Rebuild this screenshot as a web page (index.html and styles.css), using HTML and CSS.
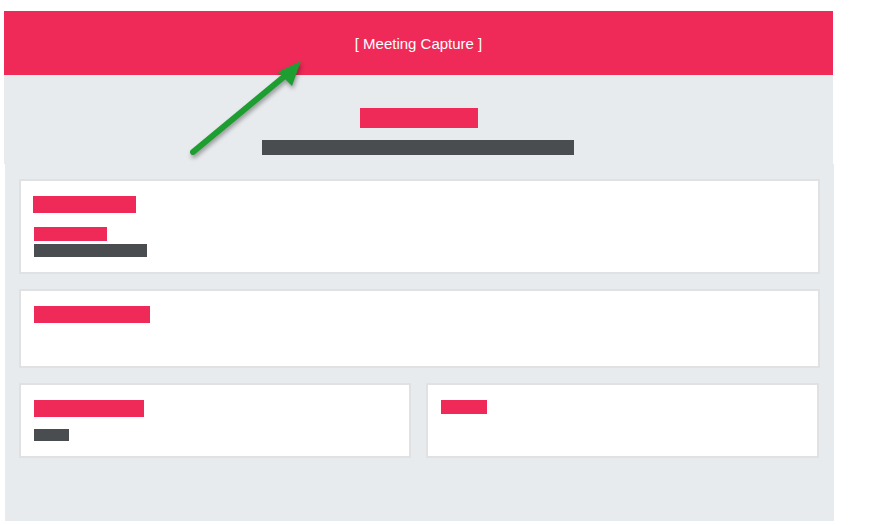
FILE: index.html
```html
<!DOCTYPE html>
<html lang="en">
<head>
<meta charset="utf-8">
<title>Meeting Capture</title>
<link rel="stylesheet" href="styles.css">
</head>
<body>
<div class="page">
  <header class="topbar">[ Meeting Capture ]</header>
  <section class="hero">
    <div class="bar red hero-title"></div>
    <div class="bar dark hero-sub"></div>
  </section>
  <main class="panel">
    <div class="card card-a">
      <div class="bar red a1"></div>
      <div class="bar red a2"></div>
      <div class="bar dark a3"></div>
    </div>
    <div class="card card-b">
      <div class="bar red b1"></div>
    </div>
    <div class="row">
      <div class="card card-c">
        <div class="bar red c1"></div>
        <div class="bar dark c2"></div>
      </div>
      <div class="card card-d">
        <div class="bar red d1"></div>
      </div>
    </div>
  </main>
</div>
<svg class="arrow" width="877" height="525" viewBox="0 0 877 525" aria-hidden="true">
  <g class="arrow-g">
    <line x1="193" y1="152" x2="286" y2="75" stroke="#1e9d31" stroke-width="6" stroke-linecap="round"/>
    <polygon points="301,61 278,72 292,86" fill="#1e9d31"/>
  </g>
</svg>
</body>
</html>
```
FILE: styles.css
```css
html, body {
  margin: 0;
  padding: 0;
  background: #ffffff;
  font-family: "Liberation Sans", Arial, sans-serif;
}

.page {
  padding-top: 11px;
  padding-left: 4px;
  width: 830px;
}

.topbar {
  width: 829px;
  height: 64px;
  background: #ef2a58;
  color: #ffffff;
  font-size: 15px;
  display: flex;
  align-items: center;
  justify-content: center;
  padding-top: 1px;
  box-sizing: border-box;
}

.hero {
  width: 829px;
  height: 89px;
  background: #e8ebee;
  display: flex;
  flex-direction: column;
  align-items: center;
  padding-top: 33px;
  box-sizing: border-box;
}

.bar {
  display: block;
}
.red { background: #ef2a58; }
.dark { background: #4a4d50; }

.hero-title { width: 118px; height: 20px; }
.hero-sub { width: 312px; height: 15px; margin-top: 12px; margin-right: 1px; }

.panel {
  margin-left: 1px;
  width: 829px;
  height: 357px;
  background: #e8ebee;
  box-sizing: border-box;
  padding: 15px 14px 0 14px;
  display: flex;
  flex-direction: column;
  gap: 15px;
}

.card {
  background: #ffffff;
  border: 2px solid #e0e1e2;
  box-sizing: border-box;
  padding: 15px 13px 0;
}

.card-a { height: 95px; }
.card-b { height: 79px; }

.row {
  display: flex;
  gap: 15px;
}
.card-c { width: 392px; flex: none; height: 75px; }
.card-d { width: 393px; flex: none; height: 75px; }

.a1 { width: 103px; height: 17px; margin-left: -1px; }
.a2 { width: 73px; height: 14px; margin-top: 14px; }
.a3 { width: 113px; height: 13px; margin-top: 3px; }

.b1 { width: 116px; height: 17px; }

.c1 { width: 110px; height: 17px; }
.c2 { width: 35px; height: 12px; margin-top: 12px; }

.d1 { width: 46px; height: 14px; }

.arrow {
  position: absolute;
  top: 0;
  left: 0;
  pointer-events: none;
}
.arrow-g {
  filter: drop-shadow(1px 3px 2px rgba(0, 0, 0, 0.35));
}
```
